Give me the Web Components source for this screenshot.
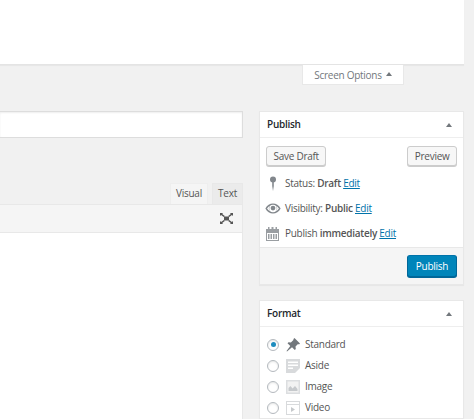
<!doctype html>
<html>
<head>
<meta charset="utf-8">
<title>Edit Post</title>
<style>
  html, body { margin: 0; height: 100%; overflow: hidden; background: #f1f1f1; }
  body { font: 13px/1.4 "Open Sans", sans-serif; color: #444; letter-spacing: -.27px; --ui-size: 10px; }
</style>
</head>
<body>

<template id="screen-top-tpl">
  <style>
    :host { display: block; width: 464px; }
    .panel { height: 64px; background: #fff; border-bottom: 1px solid #e4e4e4; box-shadow: 0 1px 1px rgba(0,0,0,.04); }
    .row { display: flex; justify-content: flex-end; padding-right: 60px; }
    .tab { width: 100px; height: 19px; background: #fff; border: solid #e8e8e8; border-width: 0 1px 1px;
      display: flex; align-items: center; justify-content: center; gap: 4px; font-size: var(--ui-size); color: #72777c; }
    .arrow { width: 0; height: 0; border: 3.500px solid transparent; border-top: 0; border-bottom: 4px solid #72777c; margin-top: -2px; }
  </style>
  <div class="panel"></div>
  <div class="row"><div class="tab">Screen Options <span class="arrow"></span></div></div>
</template>

<template id="editor-area-tpl">
  <style>
    :host { display: block; width: 243px; flex: none; }
    .title { height: 25px; background: #fff; border: 1px solid #ddd; border-left: 0; box-shadow: inset 0 1px 2px rgba(0,0,0,.07); }
    .tabs { display: flex; justify-content: flex-end; gap: 4px; margin-top: 45px; font-size: var(--ui-size); color: #555; }
    .tabs div { height: 21px; padding-bottom: 2px; display: flex; align-items: center; justify-content: center; box-sizing: border-box; }
    .visual { width: 38px; background: #f5f5f5; border: 1px solid #eee; border-bottom: 0; }
    .text { width: 31px; background: #ebebeb; border: 1px solid #e8e8e8; border-bottom: 0; }
    .toolbar { height: 27px; background: #f5f5f5; border: 1px solid #e8e8e8; border-left: 0; display: flex; align-items: center; justify-content: flex-end; padding-right: 9px; }
    .body { height: 190px; background: #fff; border-right: 1px solid #e8e8e8; }
    svg { display: block; }
  </style>
  <div class="title"></div>
  <div class="tabs"><div class="visual">Visual</div><div class="text">Text</div></div>
  <div class="toolbar">
    <svg width="13" height="11" viewBox="0 0 13 11" fill="#555">
      <rect x="4" y="3.500" width="5" height="4"/>
      <path d="M0 0h3L2.200 .9 4.800 3 3.800 4 1.100 1.900 0 3zM13 0v3l-1.100-1.100L9.200 4 8.200 3l2.600-2.100L10 0zM0 11V8l1.100 1.100L3.800 7l1 1-2.600 2.100L3 11zM13 11h-3l.8-.9L8.200 8l1-1 2.700 2.100L13 8z"/>
    </svg>
  </div>
  <div class="body"></div>
</template>

<template id="meta-box-tpl">
  <style>
    :host { display: block; box-sizing: border-box; background: #fff; border: 1px solid #e8e8e8; box-shadow: 0 1px 1px rgba(0,0,0,.04); }
    .head { height: 25px; display: flex; align-items: center; justify-content: space-between; padding: 0 11px 0 7px; border-bottom: 1px solid #eee; }
    h2 { margin: 0; padding-bottom: 2px; font-size: 10px; font-weight: 600; color: #23282d; }
    .arrow { width: 0; height: 0; border: 3.500px solid transparent; border-top: 0; border-bottom: 4px solid #72777c; }
  </style>
  <div class="head"><h2><slot name="title"></slot></h2><span class="arrow"></span></div>
  <slot></slot>
</template>

<template id="wp-button-tpl">
  <style>
    :host { display: inline-block; }
    .b { height: 18px; padding: 0 6.500px; display: flex; align-items: center; border: 1px solid #ccc; border-radius: 3px; background: #f7f7f7;
      box-shadow: 0 1px 0 #ccc; font-size: var(--ui-size); color: #555; }
    :host([primary]) .b { height: 20px; width: 48px; padding: 0; justify-content: center; background: #0085ba; border-color: #0073aa #006799 #006799; box-shadow: 0 1px 0 #006799; color: #fff; }
  </style>
  <div class="b"><slot></slot></div>
</template>

<template id="misc-row-tpl">
  <style>
    :host { display: flex; align-items: center; height: 25px; font-size: var(--ui-size); color: #555; white-space: nowrap; }
    .icon { width: 25px; flex: none; display: flex; justify-content: center; box-sizing: border-box; }
    .t { padding-bottom: 2px; }
    ::slotted(b) { font-weight: 600; color: #555; }
    ::slotted(a) { color: #0073aa; text-decoration: underline; }
  </style>
  <div class="icon"><slot name="icon"></slot></div>
  <span class="t"><slot></slot></span>
</template>

<template id="format-row-tpl">
  <style>
    :host { display: flex; align-items: center; height: 21px; font-size: var(--ui-size); color: #555; }
    .radio { width: 10px; height: 10px; border: 1px solid #b4b9be; border-radius: 50%; background: #fff; flex: none; margin-right: 7px;
      box-shadow: inset 0 1px 2px rgba(0,0,0,.1); display: flex; align-items: center; justify-content: center; }
    :host([checked]) .radio::after { content: ""; width: 5px; height: 5px; border-radius: 50%; background: #1e8cbe; }
    .icon { width: 14px; height: 14px; flex: none; margin-right: 5px; display: flex; }
    .t { padding-bottom: 2px; }
  </style>
  <span class="radio"></span>
  <span class="icon"><slot name="icon"></slot></span>
  <span class="t"><slot></slot></span>
</template>

<template id="edit-screen-tpl">
  <style>
    :host { display: flex; gap: 16px; margin-top: 26px; align-items: flex-start; }
    .side { width: 205px; flex: none; display: flex; flex-direction: column; gap: 15px; }
  </style>
  <slot name="main"></slot>
  <div class="side"><slot name="side"></slot></div>
</template>

<template id="publish-body-tpl">
  <style>
    :host { display: block; }
    .actions { display: flex; justify-content: space-between; padding: 8px 6px 0; }
    .misc { display: flex; flex-direction: column; padding: 5px 0 1px; }
    .foot { height: 36px; background: #f5f5f5; border-top: 1px solid #e8e8e8; display: flex; align-items: center; justify-content: flex-end; padding-right: 6px; }
  </style>
  <div class="actions"><slot name="actions"></slot></div>
  <div class="misc"><slot name="misc"></slot></div>
  <div class="foot"><slot name="foot"></slot></div>
</template>

<template id="format-body-tpl">
  <style>
    :host { display: block; padding: 7px 0 0 7px; }
  </style>
  <slot></slot>
</template>

<screen-top></screen-top>
<edit-screen>
  <editor-area slot="main"></editor-area>
  <meta-box slot="side">
    <span slot="title">Publish</span>
    <publish-body>
      <wp-button slot="actions">Save Draft</wp-button>
      <wp-button slot="actions">Preview</wp-button>
      <misc-row slot="misc">
        <svg slot="icon" width="8" height="15" viewBox="0 0 8 15" fill="#82878c"><circle cx="4" cy="3.500" r="3"/><path d="M3.200 6h1.600v4l-.8 5-.8-5z"/></svg>
        Status: <b>Draft</b> <a href="#">Edit</a>
      </misc-row>
      <misc-row slot="misc">
        <svg slot="icon" width="16" height="11" viewBox="0 0 18 13" fill="#82878c"><path fill-rule="evenodd" d="M0 6.500C2 2.500 5.300.5 9 .5s7 2 9 6c-2 4-5.300 6-9 6s-7-2-9-6zm9-4.500a4.500 4.500 0 1 0 0 9 4.500 4.500 0 0 0 0-9zM2 6.500c.9 1.400 2 2.500 3.200 3.200a5.500 5.500 0 0 1 0-6.400C4 4 2.900 5.100 2 6.500zm10.800-3.200a5.500 5.500 0 0 1 0 6.400c1.200-.7 2.300-1.800 3.200-3.200-.9-1.400-2-2.500-3.200-3.200z"/><circle cx="9" cy="6" r="2.800"/></svg>
        Visibility: <b>Public</b> <a href="#">Edit</a>
      </misc-row>
      <misc-row slot="misc">
        <svg slot="icon" width="13" height="14" viewBox="0 0 13 14" fill="#9a9ea2"><path d="M0 2h2V0h1.500v2h2V0h2v2h2V0H11v2h2v12H0zm1 4v7h11V6z"/><path d="M2 7h1.500v5H2zM4.500 7H6v5H4.500zM7 7h1.500v5H7zM9.500 7H11v5H9.500z"/></svg>
        Publish <b>immediately</b> <a href="#">Edit</a>
      </misc-row>
      <wp-button slot="foot" primary>Publish</wp-button>
    </publish-body>
  </meta-box>
  <meta-box slot="side">
    <span slot="title">Format</span>
    <format-body>
      <format-row checked>
        <svg slot="icon" width="14" height="14" viewBox="0 0 14 14" fill="#72777c"><path d="M8.500 0 14 5.500l-1 1-1-.4-2.500 2.500.3 2.400-1 1-2.800-2.800L1 13.500l-.5-.5L4.300 8 1.500 5.200l1-1 2.400.3 2.500-2.500L7.500 1z"/></svg>
        Standard
      </format-row>
      <format-row>
        <svg slot="icon" width="14" height="14" viewBox="0 0 14 14" fill="#d8dadc"><path fill-rule="evenodd" d="M0 0h14v9l-5 5H0zm2 2.500v1.500h10V2.500zm0 3V7h10V5.500zm0 3V10h5V8.500z"/></svg>
        Aside
      </format-row>
      <format-row>
        <svg slot="icon" width="14" height="14" viewBox="0 0 14 14"><rect width="14" height="14" fill="#dcdee0"/><rect x="1.500" y="1.500" width="11" height="11" fill="#f2f2f2"/><path d="M2.500 11V8l2-2 2 2.500L9 6l2.500 3v2z" fill="#c6c9cc"/></svg>
        Image
      </format-row>
      <format-row>
        <svg slot="icon" width="14" height="14" viewBox="0 0 14 14"><rect x=".5" y=".5" width="13" height="13" fill="#fff" stroke="#d8dadc"/><path d="M1 3.500h12" stroke="#d8dadc"/><path d="M5 6l4 2.500L5 11z" fill="#c6c9cc"/></svg>
        Video
      </format-row>
    </format-body>
  </meta-box>
</edit-screen>

<script>
  // every element just stamps its own template into an open shadow root
  var names = ['screen-top', 'edit-screen', 'editor-area', 'meta-box', 'publish-body', 'format-body', 'wp-button', 'misc-row', 'format-row'];
  names.forEach(function (name) {
    customElements.define(name, class extends HTMLElement {
      constructor() {
        super();
        var shadowRoot = this.attachShadow({mode: 'open'});
        var tmpl = document.querySelector('#' + name + '-tpl');
        shadowRoot.appendChild(tmpl.content.cloneNode(true));
      }
    });
  });
</script>
</body>
</html>
